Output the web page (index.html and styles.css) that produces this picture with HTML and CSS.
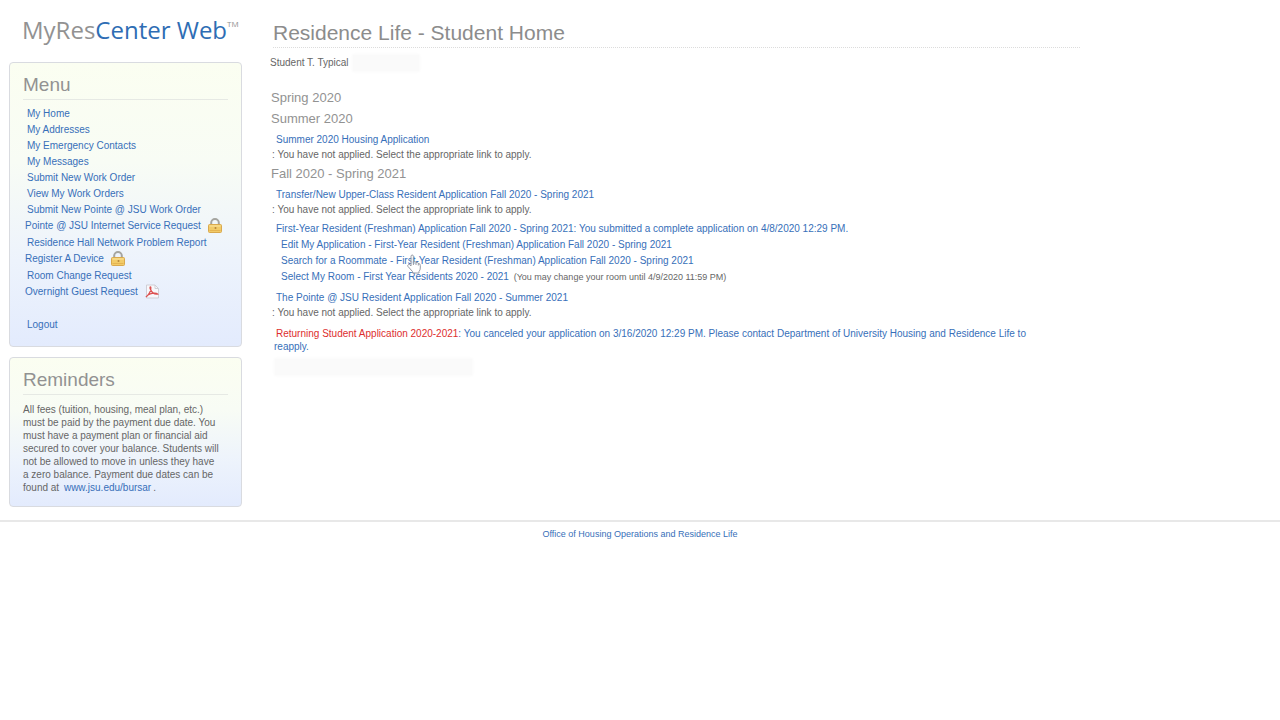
FILE: index.html
```html
<!DOCTYPE html>
<html lang="en">
<head>
    <meta charset="UTF-8">
    <title>Residence Life - Student Home</title>
    <link rel="stylesheet" href="styles.css">
</head>
<body>
    <svg class="sprite" aria-hidden="true">
        <symbol id="lock" viewBox="0 0 14 15">
            <path d="M3.2 8V4.8a3.8 3.8 0 0 1 7.6 0V8" fill="none" stroke="#a5a5a0" stroke-width="2"/>
            <rect x="0.5" y="6.5" width="13" height="8" rx="1" fill="#f2cb68" stroke="#d9a94e"/>
            <path d="M1.5 8h11" stroke="#fae4a0"/>
            <path d="M1.5 12.5h11" stroke="#e5b452"/>
            <circle cx="7.5" cy="10" r="1" fill="#b5853c"/>
        </symbol>
        <symbol id="pdf" viewBox="0 0 14 14">
            <path d="M1.5 0.5h8.5l3.5 3.5v9.5h-12z" fill="#f8f8fb" stroke="#cfcfd6"/>
            <path d="M10 0.5v3.5h3.5" fill="none" stroke="#cfcfd6"/>
            <path d="M0.8 12.5C3.5 11 6.5 6 5.8 2.8C5.3 1.5 4.5 3 5.5 5C6.5 7.5 9 9.8 12.5 9.5C11 8 6 8.5 2.5 10.8" fill="none" stroke="#dc5050" stroke-width="1.3"/>
        </symbol>
    </svg>

    <div class="page">
        <aside class="sidebar">
            <div class="logo">MyRes<span>Center Web</span><sup>TM</sup></div>

            <nav class="box menu">
                <h2>Menu</h2>
                <ul>
                    <li><a href="#">My Home</a></li>
                    <li><a href="#">My Addresses</a></li>
                    <li><a href="#">My Emergency Contacts</a></li>
                    <li><a href="#">My Messages</a></li>
                    <li><a href="#">Submit New Work Order</a></li>
                    <li><a href="#">View My Work Orders</a></li>
                    <li><a href="#">Submit New Pointe @ JSU Work Order</a></li>
                    <li class="with-icon"><a href="#">Pointe @ JSU Internet Service Request <svg><use href="#lock"/></svg></a></li>
                    <li><a href="#">Residence Hall Network Problem Report</a></li>
                    <li class="with-icon"><a href="#">Register A Device <svg><use href="#lock"/></svg></a></li>
                    <li><a href="#">Room Change Request</a></li>
                    <li class="with-icon"><a href="#">Overnight Guest Request <svg><use href="#pdf"/></svg></a></li>
                    <li class="logout"><a href="#">Logout</a></li>
                </ul>
            </nav>

            <section class="box reminders">
                <h2>Reminders</h2>
                <p>All fees (tuition, housing, meal plan, etc.) must be paid by the payment due date. You must have a payment plan or financial aid secured to cover your balance. Students will not be allowed to move in unless they have a zero balance. Payment due dates can be found at <a href="#">www.jsu.edu/bursar</a>.</p>
            </section>
        </aside>

        <main>
            <h1>Residence Life - Student Home</h1>
            <div class="student">Student T. Typical <span class="redacted"></span></div>

            <h3>Spring 2020</h3>
            <h3>Summer 2020</h3>
            <div class="application">
                <a href="#">Summer 2020 Housing Application</a>
                <p>: You have not applied. Select the appropriate link to apply.</p>
            </div>

            <h3>Fall 2020 - Spring 2021</h3>
            <div class="application">
                <a href="#">Transfer/New Upper-Class Resident Application Fall 2020 - Spring 2021</a>
                <p>: You have not applied. Select the appropriate link to apply.</p>
            </div>
            <div class="application">
                <a href="#">First-Year Resident (Freshman) Application Fall 2020 - Spring 2021: You submitted a complete application on 4/8/2020 12:29 PM.</a>
                <ul class="steps">
                    <li><a href="#">Edit My Application - First-Year Resident (Freshman) Application Fall 2020 - Spring 2021</a></li>
                    <li class="current"><a href="#">Search for a Roommate - First-Year Resident (Freshman) Application Fall 2020 - Spring 2021</a>
                        <svg class="cursor" viewBox="0 0 14 20" aria-hidden="true">
                            <path d="M4 12V2.5Q4 1 5.2 1T6.4 2.5V8Q8.5 7 9 8.5Q11 8 11.3 9.5Q13.3 9.3 13.3 11.5V14Q13.3 16 12 17.5V19H5.5V17.5L1 12.5Q0.3 11 1.5 10.5T4 12M6.4 8V11M9 8.5V11M11.3 9.5V11.5" fill="#fff" fill-opacity="0.7" stroke="#8a8f9a" stroke-width="0.9"/>
                        </svg>
                    </li>
                    <li><a href="#">Select My Room - First Year Residents 2020 - 2021</a> <small>(You may change your room until 4/9/2020 11:59 PM)</small></li>
                </ul>
            </div>
            <div class="application">
                <a href="#">The Pointe @ JSU Resident Application Fall 2020 - Summer 2021</a>
                <p>: You have not applied. Select the appropriate link to apply.</p>
            </div>
            <div class="canceled">
                <a href="#"><span>Returning Student Application 2020-2021</span>: You canceled your application on 3/16/2020 12:29 PM. Please contact Department of University Housing and Residence Life to reapply.</a>
            </div>
            <div class="redacted wide"></div>
        </main>
    </div>

    <footer><a href="#">Office of Housing Operations and Residence Life</a></footer>
</body>
</html>
```

FILE: styles.css
```css
body {
    margin: 0;
    background-color: #fff;
    color: #666;
    font-family: Arial, "Liberation Sans", sans-serif;
    font-size: 10px;
    line-height: 16px;
}

a {
    color: #376fb9;
    text-decoration: none;
}

a:hover {
    text-decoration: underline;
}

h1, h2, h3, p, ul {
    margin: 0;
    padding: 0;
    font-weight: normal;
}

ul {
    list-style: none;
}

.sprite {
    display: none;
}

.page {
    display: flex;
    gap: 28px;
    padding: 0 200px 13px 9px;
}

/* left column */
.sidebar {
    flex: 0 0 233px;
}

.logo {
    height: 48px;
    margin-bottom: 14px;
    padding: 0 0 0 13px;
    color: #929292;
    font-family: "Open Sans", "Noto Sans", sans-serif;
    font-size: 24px;
    line-height: 60px;
    white-space: nowrap;
}

.logo span {
    color: #2e6db4;
}

.logo sup {
    font-size: 8px;
    line-height: 8px;
    vertical-align: 12px;
}

.box {
    box-sizing: border-box;
    margin-bottom: 10px;
    padding: 9px 13px 13px;
    border: 1px solid #d9dbe0;
    border-radius: 4px;
    background: linear-gradient(#fbfef1, #f8fcf5 35%, #edf3fc 70%, #e3ebfd);
}

.box h2 {
    margin-bottom: 6px;
    padding-bottom: 2px;
    border-bottom: 1px solid #e6e9e4;
    color: #929292;
    font-size: 19px;
    line-height: 25px;
}

.menu li {
    padding-left: 4px;
    white-space: nowrap;
}

.menu .with-icon {
    height: 17px;
    padding-left: 2px;
}

.menu svg {
    width: 14px;
    height: 15px;
    margin-left: 4px;
    vertical-align: -4px;
}

.menu .logout {
    margin-top: 16px;
}

.box.reminders {
    margin-bottom: 0;
    padding-bottom: 12px;
}

.reminders p {
    padding: 2px 8px 0 0;
    line-height: 13px;
}

.reminders a {
    margin: 0 2px;
}

/* main column */
main {
    flex: 1;
    min-width: 0;
}

h1 {
    margin: 19px 0 7px 3px;
    border-bottom: 1px dotted #dcdcdc;
    color: #8c8c8c;
    font-size: 21px;
    line-height: 28px;
}

.student {
    margin-bottom: 16px;
}

.redacted {
    display: inline-block;
    width: 66px;
    height: 16px;
    margin-left: 2px;
    background-color: #fafafa;
    box-shadow: 0 0 3px 1px #fafafa;
    vertical-align: middle;
}

.redacted.wide {
    display: block;
    width: 197px;
    margin: 6px 0 0 5px;
}

h3 {
    padding-left: 1px;
    color: #929292;
    font-size: 13px;
    line-height: 21px;
}

.application {
    padding: 3px 0 2px 6px;
}

.application > a {
    display: block;
}

.application p {
    margin-left: -4px;
    line-height: 13px;
}

.steps {
    padding-left: 5px;
}

.current {
    position: relative;
}

/* pointer lying over the hovered link */
.cursor {
    position: absolute;
    top: 1px;
    left: 126px;
    width: 14px;
    height: 20px;
}

small {
    margin-left: 2px;
    font-size: 9px;
}

.canceled {
    padding: 6px 24px 0 4px;
    line-height: 13px;
}

.canceled a {
    display: block;
}

.canceled span {
    margin-left: 2px;
    color: #dd2e2e;
}

footer {
    padding: 4px;
    border-top: 2px solid #e8e8e8;
    font-size: 9px;
    text-align: center;
}
```
